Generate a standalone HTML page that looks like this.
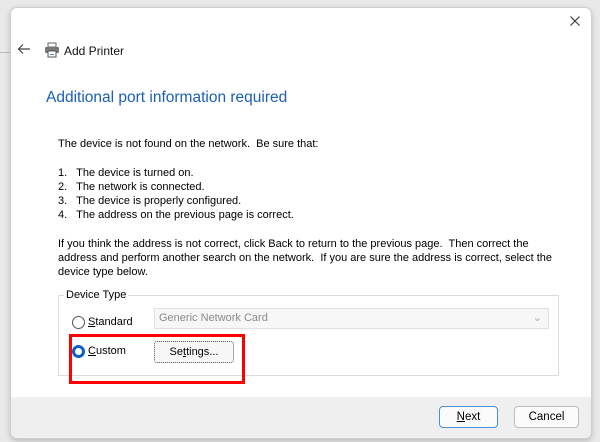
<!DOCTYPE html>
<html><head><style>
body{margin:0;width:600px;height:442px;background:#e9e9e9;position:relative;overflow:hidden;font-family:"Liberation Sans",sans-serif;font-size:11px;color:#000}
.dlg{position:absolute;left:10px;top:7px;width:580px;height:430px;background:#fff;border:1px solid #cfcfcf;border-radius:7px;overflow:hidden;box-shadow:0 2px 6px rgba(0,0,0,.2)}
.a{position:absolute;white-space:nowrap}
.foot{position:absolute;left:0;right:0;top:389px;bottom:0;background:#efefef}
.btn{position:absolute;height:20px;border:1px solid #bdbdbd;border-radius:4px;background:#fbfbfb;text-align:center;line-height:20px;font-size:11.5px}
</style></head><body>
<div class="a" style="left:0;top:52px;width:10px;height:1px;background:#bbb"></div>
<div class="dlg">
<svg class="a" style="left:559px;top:8px" width="10" height="10"><path d="M0.5 0.5L9.5 9.5M9.5 0.5L0.5 9.5" stroke="#333" stroke-width="1.1"/></svg>
<svg class="a" style="left:6px;top:35px" width="14" height="12"><path d="M13 6H2M6 1.5L1.5 6 6 10.5" stroke="#444" stroke-width="1.2" fill="none"/></svg>
<svg class="a" style="left:33px;top:34px" width="16" height="16"><rect x="4" y="1" width="8" height="4" fill="#fff" stroke="#666"/><rect x="1" y="5" width="14" height="6" rx="1" fill="#777"/><rect x="4" y="9" width="8" height="6" fill="#fff" stroke="#555"/><rect x="6" y="12" width="4" height="1" fill="#3a8ad8"/></svg>
<div class="a" style="left:53px;top:36px;font-size:12px;color:#111">Add Printer</div>
<div class="a" style="left:35px;top:81px;font-size:15.5px;color:#1c5fb5">Additional port information required</div>
<div class="a" style="left:47px;top:130px">The device is not found on the network.&nbsp; Be sure that:</div>
<div class="a" style="left:47px;top:158px;line-height:14px">1.&nbsp;&nbsp; The device is turned on.<br>2.&nbsp;&nbsp; The network is connected.<br>3.&nbsp;&nbsp; The device is properly configured.<br>4.&nbsp;&nbsp; The address on the previous page is correct.</div>
<div class="a" style="left:47px;top:229px;line-height:14px">If you think the address is not correct, click Back to return to the previous page.&nbsp; Then correct the<br>address and perform another search on the network.&nbsp; If you are sure the address is correct, select the<br>device type below.</div>
<div class="a" style="left:47px;top:287px;width:499px;height:79px;border:1px solid #dcdcdc"></div>
<div class="a" style="left:53px;top:281px;background:#fff;padding:0 2px">Device Type</div>
<div class="a" style="left:61px;top:308px;width:11px;height:11px;border:1px solid #555;border-radius:50%;background:#fff"></div>
<div class="a" style="left:77px;top:308px"><u>S</u>tandard</div>
<div class="a" style="left:143px;top:300px;width:389px;height:19px;border:1px solid #e0e0e0;background:#f7f7f7;color:#8a8a8a;line-height:19px;padding-left:4px">Generic Network Card<span style="position:absolute;right:6px;color:#aaa">⌄</span></div>
<div class="a" style="left:61px;top:337px;width:7px;height:7px;border:3px solid #0c5fc4;border-radius:50%;background:#fff"></div>
<div class="a" style="left:77px;top:337px"><u>C</u>ustom</div>
<div class="a" style="left:143px;top:333px;width:78px;height:20px;border:1px dotted #555;border-radius:3px;background:#f7f7f7;text-align:center;line-height:20px">Se<u>t</u>tings...</div>
<div class="a" style="left:58px;top:326px;width:170px;height:44px;border:3px solid #f00"></div>
<div class="foot"></div>
<div class="btn" style="left:428px;top:398px;width:57px;border:1px solid #4a8fd6"><u>N</u>ext</div>
<div class="btn" style="left:503px;top:398px;width:63px">Cancel</div>
</div>
</body></html>
